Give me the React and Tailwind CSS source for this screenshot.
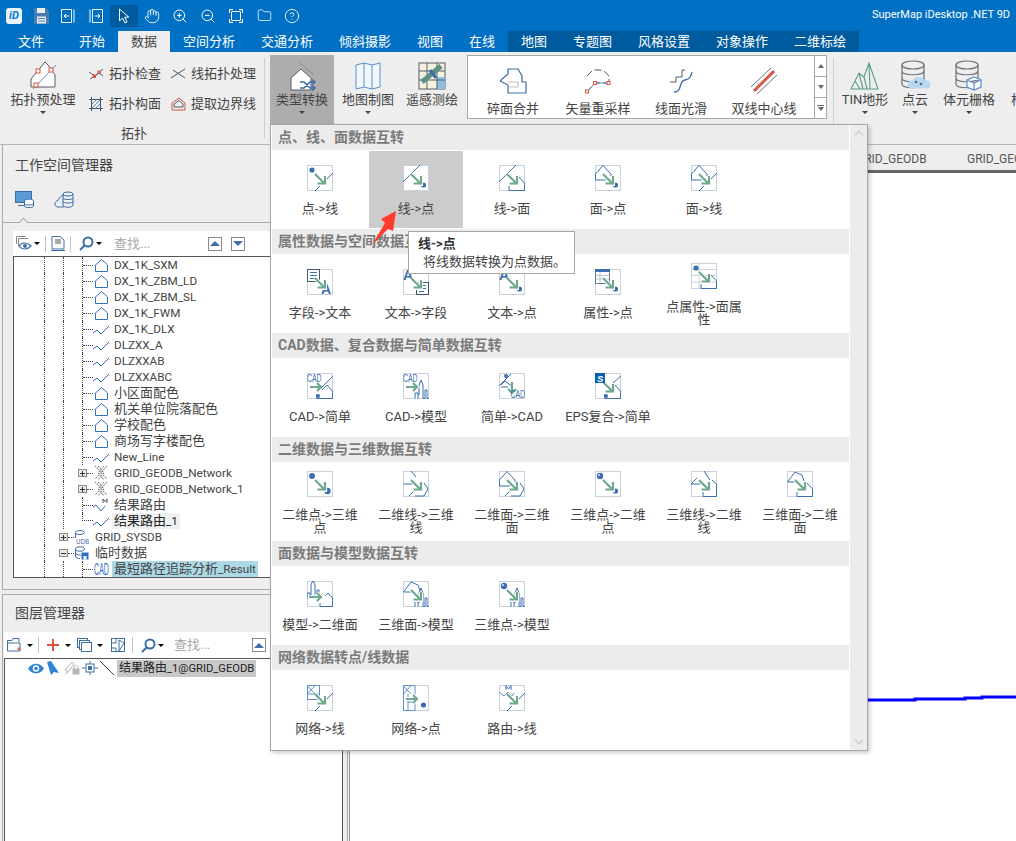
import React from "react";
import { ChevronUp, ChevronDown, Hand, ZoomIn, ZoomOut, Folder, CircleHelp } from "lucide-react";

const BLUE = "#3b6fb0";
const GREEN = "#6fa88f";

// shared pieces of the 26x26 conversion icons
const Dot = ({ x, y, r = 2.6, c = BLUE }) => <circle cx={x} cy={y} r={r} fill={c} />;
const Ball = ({ x, y, r = 3.2 }) => (
  <g>
    <circle cx={x} cy={y} r={r} fill={BLUE} />
    <circle cx={x - 1} cy={y - 1} r={1.1} fill="#cfe0f2" />
  </g>
);
const P = ({ d, c = BLUE, w = 1 }) => <path d={d} fill="none" stroke={c} strokeWidth={w} />;
const LineBR = () => <P d="M8 26 L26 8" />;
const LineTL = () => <P d="M0 17 L17 0" />;
const HouseBR = () => <P d="M10 25.5 H25.5 V18 L20 12 L15 17 M10 25.5 V21" />;
const HouseTL = () => <P d="M0.5 9 L8 0.5 L16 9 V11 M0.5 9 V15 H11" />;
const Line3dBR = () => <P d="M6 25 L11 20 M12 25 H21 L25 18 L21 12" />;
const House3dTL = () => <P d="M0.5 11 L8 1 L15 4 L17 10 M0.5 11 H12" />;
const Skyline = ({ x = 11, y = 0 }) => (
  <g transform={`translate(${x} ${y})`}>
    <P d="M0 25.5 V20 H3 V25.5 M3 22 H4 V12 L6 7 L8 12 V25.5 H10 V17 H12 V25.5 H14.5" />
  </g>
);
const Cad = ({ x = 0, y = 9 }) => (
  <text x={x} y={y} fontSize="10" fill={BLUE} textLength="14.5" lengthAdjust="spacingAndGlyphs" fontFamily="Liberation Sans">
    CAD
  </text>
);
const BigA = ({ x, y }) => (
  <text x={x} y={y} fontSize="14" fontWeight="700" fill={BLUE} fontFamily="Liberation Sans">
    A
  </text>
);
const Doc = ({ x, y }) => (
  <g transform={`translate(${x} ${y})`}>
    <rect x="0.5" y="0.5" width="12" height="12" fill="#fff" stroke="#44546a" />
    <P d="M3 3.5 H10 M3 6.5 H10 M3 9.5 H8" />
  </g>
);
const Table = () => (
  <g>
    <rect x="0.5" y="0.5" width="14" height="14" fill="#fff" stroke="#6a7a90" />
    <rect x="0" y="0" width="15" height="3" fill={BLUE} />
    <P d="M1 6.5 H14 M1 10 H14 M5 3 V14" c="#b8c4d4" />
  </g>
);
const ArrowDiag = () => (
  <g>
    <P d="M8 9 L18 19 M10 19 H18 V11" c="#fff" w={4} />
    <P d="M8 9 L18 19 M10.5 18.5 H18 V11" c={GREEN} w={2.2} />
  </g>
);
const ArrowRight = ({ y = 14 }) => (
  <g>
    <P d={`M3 ${y} H14 M10 ${y - 4} L14 ${y} L10 ${y + 4}`} c="#fff" w={4} />
    <P d={`M3 ${y} H14 M10 ${y - 4} L14 ${y} L10 ${y + 4}`} c={GREEN} w={2.2} />
  </g>
);
const ArrowDown = () => <P d="M13 9 V20 M9 16 L13 20 L17 16" c={GREEN} w={2.2} />;

function ConvIcon({ kind }) {
  const parts = {
    pl: [<Dot key="a" x={5} y={5} />, <LineBR key="b" />, <ArrowDiag key="c" />],
    lp: [<LineTL key="a" />, <Dot key="b" x={20.5} y={20} />, <ArrowDiag key="c" />],
    lf: [<LineTL key="a" />, <HouseBR key="b" />, <ArrowDiag key="c" />],
    fp: [<HouseTL key="a" />, <Dot key="b" x={20.5} y={20} />, <ArrowDiag key="c" />],
    fl: [<HouseTL key="a" />, <LineBR key="b" />, <ArrowDiag key="c" />],
    ft: [<Doc key="a" x={0} y={0} />, <BigA key="b" x={14} y={25} />, <ArrowDiag key="c" />],
    tf: [<BigA key="a" x={0} y={11} />, <Doc key="b" x={13} y={13} />, <ArrowDiag key="c" />],
    tp: [<BigA key="a" x={0} y={11} />, <Dot key="b" x={20.5} y={20} />, <ArrowDiag key="c" />],
    ap: [<Table key="a" />, <Dot key="b" x={20.5} y={20} />, <ArrowDiag key="c" />],
    aa: [
      <P key="g" d="M0.5 6.5 H25.5 M0.5 12.5 H25.5 M0.5 19 H25.5 M8 0 V26" c="#c9d1de" />,
      <Dot key="a" x={5} y={5} />,
      <HouseBR key="b" />,
      <ArrowDiag key="c" />,
    ],
    cs: [<Cad key="a" />, <ArrowRight key="b" />, <Dot key="d" x={11} y={23} r={2} />, <P key="e" d="M14 15 L26 3" />, <HouseBR key="f" />],
    cm: [<Cad key="a" />, <Skyline key="c" x={12} />, <ArrowRight key="b" />],
    sc: [<Dot key="a" x={7} y={3} r={2} />, <P key="b" d="M0 13 L12 1 M2 12 L6 8 L14 14 M2 14 H9" />, <ArrowDown key="c" />, <Cad key="d" x={11.5} y={25} />],
    es: [
      <Dot key="d" x={11} y={23} r={2} />,
      <P key="e" d="M18 10 L26 3" />,
      <HouseBR key="f" />,
      <ArrowDiag key="c" />,
      <rect key="a" x="0" y="0" width="10" height="10" fill="#0b5fb0" />,
      <text key="b" x="2" y="8.5" fontSize="9.5" fontWeight="700" fontStyle="italic" fill="#fff" fontFamily="Liberation Sans">S</text>,
    ],
    p23: [<Dot key="a" x={5} y={5} r={3} />, <Ball key="b" x={20.5} y={20} />, <ArrowDiag key="c" />],
    l23: [<P key="a" d="M8 0 L13 6 M0 13 H12" />, <Line3dBR key="b" />, <ArrowDiag key="c" />],
    f23: [<HouseTL key="a" />, <Line3dBR key="b" />, <ArrowDiag key="c" />],
    p32: [<Ball key="a" x={5} y={5} />, <Dot key="b" x={20.5} y={20} />, <ArrowDiag key="c" />],
    l32: [<P key="a" d="M0 13 L6 7 M13 0 L19 9 M0 13 H12" />, <P key="b" d="M12 25.5 H25.5 V13 L21 9 M12 25.5 V21" />, <ArrowDiag key="c" />],
    f32: [<House3dTL key="a" />, <HouseBR key="b" />, <ArrowDiag key="c" />],
    mf: [<Skyline key="a" x={0} y={-8} />, <P key="b" d="M13 25.5 H25.5 V17 L21 12 L18 15 M13 25.5 V22" />, <ArrowRight key="c" y={16} />],
    fm: [<House3dTL key="a" />, <Skyline key="b" x={12} />, <ArrowDiag key="c" />],
    pm: [<Ball key="a" x={5} y={5} />, <Skyline key="b" x={12} />, <ArrowDiag key="c" />],
    nl: [<P key="a" d="M0.5 0.5 H12.5 V14.5 H0.5 Z M0.5 9 L8 0.5 M0.5 1 L12 13 M0.5 9 H12" c="#5f8fc7" />, <LineBR key="b" />, <ArrowDiag key="c" />],
    np: [<P key="a" d="M0.5 0.5 H12 V25.5 H0.5 Z M0.5 9 L8 0.5 M0.5 1 L8 9 M5 9 V25.5 M5 17 H12" c="#5f8fc7" />, <ArrowRight key="b" />, <Dot key="c" x={20.5} y={20} />],
    rl: [
      <P key="a" d="M0 7 L5 11 L9 7 L13 11 L15 8" c="#5f8fc7" />,
      <P key="b" d="M7 5 V0.5 L9.5 4 L12 0.5 V5" />,
      <LineBR key="c" />,
      <ArrowDiag key="d" />,
    ],
  };
  return (
    <svg width="26" height="26" viewBox="0 0 26 26" className="shrink-0">
      <rect x="0.5" y="0.5" width="25" height="25" fill="#fff" stroke="#c9d1de" />
      {parts[kind]}
    </svg>
  );
}

const sections = [
  {
    title: "点、线、面数据互转",
    items: [["点->线", "pl"], ["线->点", "lp", true], ["线->面", "lf"], ["面->点", "fp"], ["面->线", "fl"]],
  },
  {
    title: "属性数据与空间数据互转",
    items: [["字段->文本", "ft"], ["文本->字段", "tf"], ["文本->点", "tp"], ["属性->点", "ap"], ["点属性->面属性", "aa"]],
  },
  {
    title: "CAD数据、复合数据与简单数据互转",
    items: [["CAD->简单", "cs"], ["CAD->模型", "cm"], ["简单->CAD", "sc"], ["EPS复合->简单", "es"]],
  },
  {
    title: "二维数据与三维数据互转",
    items: [["二维点->三维点", "p23"], ["二维线->三维线", "l23"], ["二维面->三维面", "f23"], ["三维点->二维点", "p32"], ["三维线->二维线", "l32"], ["三维面->二维面", "f32"]],
  },
  {
    title: "面数据与模型数据互转",
    items: [["模型->二维面", "mf"], ["三维面->模型", "fm"], ["三维点->模型", "pm"]],
  },
  {
    title: "网络数据转点/线数据",
    items: [["网络->线", "nl"], ["网络->点", "np"], ["路由->线", "rl"]],
  },
];

function TitleBar() {
  const Box = ({ flip }) => (
    <svg width="14" height="14" viewBox="0 0 14 14" fill="none" stroke="#fff" strokeWidth="1" className={flip ? "-scale-x-100" : ""}>
      <path d="M0.5 0.5 H10.5 V13.5 H0.5 Z M13 0.5 V13.5 M8 7 H3 M5 5 L3 7 L5 9" />
    </svg>
  );
  const cell = "flex h-[22px] w-[28px] items-center justify-center";
  return (
    <div className="flex h-[31px] items-center bg-[#0070c4] text-white">
      <div className="ml-[6px] flex h-[16px] w-[16px] items-center justify-center rounded-[3px] bg-[#e8f3fb]">
        <span className="text-[11px] font-bold italic leading-none text-[#0a78c8]">iD</span>
      </div>
      <svg width="15" height="16" viewBox="0 0 15 16" className="ml-[12px]">
        <path d="M0 0 H12 L15 3 V16 H0 Z" fill="#4b7cb4" />
        <rect x="3" y="0" width="8" height="5" fill="#e9edf2" />
        <path d="M2.5 8 H12.5 V16 H2.5 Z M4 10.5 H11 M4 13 H11" fill="#e9edf2" stroke="#4b7cb4" />
      </svg>
      <div className={`${cell} ml-[5px]`}><Box /></div>
      <div className={cell}><Box flip /></div>
      <div className={`${cell} bg-[#005a9e]`}>
        <svg width="12" height="16" viewBox="0 0 12 16" fill="none" stroke="#fff">
          <path d="M1.5 1 V13 L4.5 10 L7 15 L9 14 L6.8 9.2 H10.8 Z" />
        </svg>
      </div>
      <div className={cell}><Hand size={16} strokeWidth={1.3} /></div>
      <div className={cell}><ZoomIn size={16} strokeWidth={1.5} /></div>
      <div className={cell}><ZoomOut size={16} strokeWidth={1.5} /></div>
      <div className={cell}>
        <svg width="14" height="14" viewBox="0 0 14 14" fill="none" stroke="#fff">
          <path d="M0.5 4 V0.5 H4 M10 0.5 H13.5 V4 M13.5 10 V13.5 H10 M4 13.5 H0.5 V10 M2.5 2.5 H11.5 V11.5 H2.5 Z" />
        </svg>
      </div>
      <div className={cell}><Folder size={15} strokeWidth={1.2} /></div>
      <div className={cell}><CircleHelp size={16} strokeWidth={1.3} /></div>
      <span className="ml-auto w-[144px] shrink-0 overflow-hidden whitespace-nowrap text-[11px]">SuperMap iDesktop .NET 9D</span>
    </div>
  );
}

function TabRow() {
  const tab = "flex h-full items-center justify-center whitespace-nowrap text-[13px] text-white";
  const main = [["文件", 66], ["开始", 52], ["数据", 52], ["空间分析", 78], ["交通分析", 78], ["倾斜摄影", 78], ["视图", 52], ["在线", 52]];
  const ctx = [["地图", 52], ["专题图", 65], ["风格设置", 78], ["对象操作", 78], ["二维标绘", 78]];
  return (
    <div className="flex h-[21px] items-stretch bg-[#0070c4]">
      {main.map(([t, w]) => (
        <div
          key={t}
          style={{ width: w }}
          className={t === "数据" ? "flex h-full items-center justify-center bg-[#eeeeee] text-[13px] text-[#444]" : t === "文件" ? `${tab} pr-[4px]` : tab}
        >
          {t}
        </div>
      ))}
      {ctx.map(([t, w]) => (
        <div key={t} style={{ width: w }} className={`${tab} bg-[#005a9e]`}>
          {t}
        </div>
      ))}
    </div>
  );
}

const Caret = () => <span className="mt-[3px] h-0 w-0 border-x-[3px] border-t-[3px] border-x-transparent border-t-[#444]" />;

function BigBtn({ label, w, active, caret = true, children }) {
  return (
    <div
      style={{ width: w }}
      className={`flex shrink-0 flex-col items-center whitespace-nowrap pt-[5px] text-[13px] leading-[16px] text-[#444] ${active ? "h-[69px] bg-[#adadad]" : ""}`}
    >
      <div className="flex h-[32px] items-center justify-center">{children}</div>
      <span>{label}</span>
      {caret && <Caret />}
    </div>
  );
}

function SmallBtn({ label, children }) {
  return (
    <div className="flex h-[30px] items-center gap-[5px] whitespace-nowrap text-[13px] text-[#444]">
      <span className="flex w-[16px] justify-center">{children}</span>
      {label}
    </div>
  );
}

const DB = ({ children }) => (
  <svg width="38" height="32" viewBox="0 0 38 32" fill="none" stroke="#6a7078" strokeWidth="1.2">
    <ellipse cx="17" cy="5" rx="11" ry="4" />
    <path d="M6 5 V24 C6 29 28 29 28 24 V5 M6 11 C6 16 28 16 28 11 M6 18 C6 23 28 23 28 18" />
    {children}
  </svg>
);

function Ribbon() {
  return (
    <div className="flex h-[93px] items-start border-b border-[#b5b5b5] bg-[#eeeeee] pt-[3px]">
      <div className="relative flex h-[86px] w-[265px] shrink-0">
        <BigBtn label="拓扑预处理" w={86}>
          <svg width="26" height="28" viewBox="0 0 26 28" fill="#fff" stroke="#555c66">
            <path d="M1 17 V25 H25 V13 L18 3 L15 0 L1 17" />
            <path d="M3 27 L26 3" fill="none" stroke="#5b8ec9" />
            <rect x="4" y="21" width="4" height="4" fill="#fff" stroke="#d9553f" />
            <rect x="19" y="6" width="4" height="4" fill="#fff" stroke="#d9553f" />
            <rect x="6" y="7" width="4" height="4" fill="#fff" stroke="#d9553f" />
          </svg>
        </BigBtn>
        <div className="ml-[2px] flex flex-col pt-[4px]">
          <SmallBtn label="拓扑检查">
            <svg width="15" height="12" viewBox="0 0 15 12" fill="none" stroke="#555c66">
              <path d="M0 4 L6 8 L14 1 M1 11 L6 8 L10 5 L14 8" />
              <rect x="4" y="7" width="2.5" height="2.5" stroke="#d9553f" />
              <rect x="9" y="3" width="2.5" height="2.5" stroke="#d9553f" />
            </svg>
          </SmallBtn>
          <SmallBtn label="拓扑构面">
            <svg width="14" height="14" viewBox="0 0 14 14" fill="none" stroke="#44546a">
              <path d="M2.5 0 V14 M11.5 0 V14 M0 2.5 H14 M0 11.5 H14" />
              <path d="M3 7 L7 3 M3 11 L11 3 M7 11 L11 7" stroke="#5b8ec9" />
            </svg>
          </SmallBtn>
        </div>
        <div className="ml-[9px] flex flex-col pt-[4px]">
          <SmallBtn label="线拓扑处理">
            <svg width="15" height="12" viewBox="0 0 15 12" fill="none" stroke="#44546a">
              <path d="M0 10 L14 1 M2 2 L14 10" />
            </svg>
          </SmallBtn>
          <SmallBtn label="提取边界线">
            <svg width="15" height="14" viewBox="0 0 15 14" fill="none" stroke="#555c66">
              <path d="M1 13 V6 L8 1 L14 6 V13 Z" stroke="#d9553f" />
              <path d="M3 10 V7 L8 3.5 L12 7 V10 H3" />
            </svg>
          </SmallBtn>
        </div>
        <span className="absolute right-0 top-[3px] h-[80px] w-[1px] bg-[#d0d0d0]" />
        <span className="absolute bottom-[-1px] left-[121px] text-[13px] leading-[16px] text-[#444]">拓扑</span>
      </div>

      <div className="ml-[5px]">
        <BigBtn label="类型转换" w={64} active>
          <svg width="28" height="30" viewBox="0 0 28 30" fill="none">
            <path d="M12 2 L26 14" stroke="#8b8b8b" />
            <path d="M3 29 V17 L13 8 L23 17 V29 Z" fill="#fff" stroke="#555c66" />
            <path d="M12 21 H16 L22 27 H26 M12 27 H16 L22 21 H26 M24 18.5 L27 21 L24 23.5 M24 24.5 L27 27 L24 29.5" stroke="#3d6ea8" strokeWidth="1.6" />
          </svg>
        </BigBtn>
      </div>
      <BigBtn label="地图制图" w={68}>
        <svg width="26" height="28" viewBox="0 0 26 28" fill="#f2f7fc" stroke="#5b8ec9">
          <path d="M1 3 L9 1 L17 3 L25 1 V25 L17 27 L9 25 L1 27 Z M9 1 V25 M17 3 V27" />
        </svg>
      </BigBtn>
      <BigBtn label="遥感测绘" w={60} caret={false}>
        <svg width="28" height="28" viewBox="0 0 28 28" fill="none">
          <rect x="1" y="1" width="26" height="26" fill="#f6f2dd" stroke="#555c66" />
          <rect x="19" y="15" width="8" height="12" fill="#8fbfe0" />
          <path d="M1 9 H27 M1 18 H27 M9 1 V27 M19 1 V27" stroke="#555c66" />
          <path d="M4 20 L23 4" stroke="#5d8f86" strokeWidth="5" />
          <path d="M12 8 L18 16" stroke="#3d6ea8" strokeWidth="3" />
        </svg>
      </BigBtn>

      <div className="ml-[5px] flex h-[64px] w-[360px] shrink-0 border border-[#a8a8a8] bg-white">
        <div className="flex flex-1 pt-[2px]">
          <GalleryItem label="碎面合并" w={90}>
            <svg width="28" height="26" viewBox="0 0 28 26" fill="none" stroke="#3d6ea8" strokeWidth="1.2">
              <path d="M1 13 L9 6 V1 H19 L23 8 V14 H27 V25 H9 V17 L1 13" />
              <path d="M9 14 H19 V19 H9" stroke="#c0c0c0" />
            </svg>
          </GalleryItem>
          <GalleryItem label="矢量重采样" w={80}>
            <svg width="26" height="26" viewBox="0 0 26 26" fill="none">
              <path d="M2 24 L10 15 H24 M2 8 L8 2 H18 L24 8 V15" stroke="#555c66" strokeDasharray="7 3" />
              <path d="M2 24 L10 15 H24" stroke="#5b8ec9" />
              <rect x="0.5" y="22" width="3" height="3" fill="#fff" stroke="#d9553f" />
              <rect x="8.5" y="13.5" width="3" height="3" fill="#fff" stroke="#d9553f" />
              <rect x="22" y="13.5" width="3" height="3" fill="#fff" stroke="#d9553f" />
            </svg>
          </GalleryItem>
          <GalleryItem label="线面光滑" w={86}>
            <svg width="24" height="26" viewBox="0 0 24 26">
              <path d="M1 14 H7 V9 H13 V2 H16" fill="none" stroke="#555c66" />
              <path d="M5 24 C14 24 9 13 16 12 C21 11 22 8 23 4" fill="none" stroke="#3d6ea8" strokeWidth="1.3" />
            </svg>
          </GalleryItem>
          <GalleryItem label="双线中心线" w={80}>
            <svg width="26" height="26" viewBox="0 0 26 26" fill="none">
              <path d="M0 19 L20 0 M6 26 L26 7" stroke="#6a7078" />
              <path d="M3 23 L23 3" stroke="#d9553f" strokeWidth="3" />
            </svg>
          </GalleryItem>
        </div>
        <div className="flex w-[12px] flex-col border-l border-[#a8a8a8] text-[#666]">
          <div className="flex h-[21px] items-center justify-center border-b border-[#a8a8a8]">
            <span className="h-0 w-0 border-x-[3.5px] border-b-[4px] border-x-transparent border-b-[#666]" />
          </div>
          <div className="flex h-[21px] items-center justify-center border-b border-[#a8a8a8]">
            <span className="h-0 w-0 border-x-[3.5px] border-t-[4px] border-x-transparent border-t-[#666]" />
          </div>
          <div className="flex flex-1 flex-col items-center justify-center gap-[1px]">
            <span className="h-[1px] w-[7px] bg-[#666]" />
            <span className="h-0 w-0 border-x-[3.5px] border-t-[4px] border-x-transparent border-t-[#666]" />
          </div>
        </div>
      </div>

      <div className="ml-[6px] mt-[3px] h-[80px] border-l border-[#d0d0d0]" />
      <div className="flex">
        <BigBtn label="TIN地形" w={62}>
          <svg width="30" height="28" viewBox="0 0 30 28" fill="none" stroke="#5d9a8c" strokeWidth="1.1">
            <path d="M1 27 L9 11 L14 15 L19 1 L28 27 Z M9 11 L13 27 M14 15 L17 27 M19 1 L20 27 M5 19 L10 27" />
          </svg>
        </BigBtn>
        <BigBtn label="点云" w={38}>
          <DB>
            <path d="M16 28 C11 28 11 21 17 21 C18 16 27 16 28 21 C35 20 36 28 30 28 Z" fill="#bdd7ee" stroke="#bdd7ee" />
            <circle cx="20" cy="22" r="1.3" fill="#3d6ea8" stroke="none" />
            <circle cx="25" cy="24" r="1.3" fill="#3d6ea8" stroke="none" />
          </DB>
        </BigBtn>
        <BigBtn label="体元栅格" w={70}>
          <DB>
            <path d="M24 17 L31 20 V27 L24 30 L17 27 V20 Z M17 20 L24 23 L31 20 M24 23 V30" fill="#fff" stroke="#5b8ec9" />
          </DB>
        </BigBtn>
        <BigBtn label="构建" w={40} caret={false}>
          <span />
        </BigBtn>
      </div>
    </div>
  );
}

function GalleryItem({ label, w, children }) {
  return (
    <div style={{ width: w }} className="flex shrink-0 flex-col items-center whitespace-nowrap pt-[10px] text-[13px] leading-[16px] text-[#444]">
      <div className="flex h-[26px] items-center justify-center">{children}</div>
      <span className="mt-[7px]">{label}</span>
    </div>
  );
}

const HouseIcon = () => (
  <svg width="13" height="13" viewBox="0 0 13 13" fill="none" stroke="#2f6fc4"><path d="M0.5 12.5 V6 L6.5 0.5 L12.5 6 V12.5 Z" /></svg>
);
const LineIcon = () => (
  <svg width="16" height="8" viewBox="0 0 16 8" fill="none" stroke="#2f6fc4" className="mt-[2px]"><path d="M0 7 L4 4 L8 8 L16 0" /></svg>
);
const NetIcon = () => (
  <svg width="14" height="14" viewBox="0 0 14 14" fill="none" stroke="#666c74"><path d="M1 0 L13 13 M13 0 L1 13 M4 0 L10 7 L4 14 M10 0 L4 7 L10 14" strokeDasharray="2 1" /></svg>
);
const RouteIcon = () => (
  <svg width="16" height="14" viewBox="0 0 16 14" fill="none" stroke="#2f6fc4">
    <path d="M0 9 L3 7 L8 13 L12 8" />
    <path d="M10 5 V1 L12 3.5 L14 1 V5" stroke="#44546a" />
  </svg>
);
const UdbIcon = () => (
  <svg width="14" height="14" viewBox="0 0 14 14" fill="none" stroke="#3d6ea8">
    <ellipse cx="5" cy="2.5" rx="4.5" ry="2" />
    <path d="M0.5 3 V8" />
    <text x="1" y="13.5" fontSize="7" fill="#3d6ea8" stroke="none" textLength="13" lengthAdjust="spacingAndGlyphs" fontFamily="Liberation Sans">UDB</text>
  </svg>
);
const TempIcon = () => (
  <svg width="14" height="14" viewBox="0 0 14 14" fill="none" stroke="#3d6ea8">
    <ellipse cx="5" cy="3" rx="4.5" ry="2.2" />
    <path d="M0.5 3 V10 C0.5 12 3 12.5 5 12.5 M0.5 7 C1 9 4 9 6 9" />
    <rect x="6.5" y="6.5" width="7" height="7" fill="#2f6fc4" stroke="none" />
    <rect x="8.5" y="10" width="3" height="3.5" fill="#fff" stroke="none" />
  </svg>
);
const CadIcon = () => (
  <svg width="15" height="14" viewBox="0 0 15 14">
    <text x="0" y="13" fontSize="16" fill="#2f6fc4" textLength="15" lengthAdjust="spacingAndGlyphs" fontFamily="Liberation Sans">CAD</text>
  </svg>
);

const treeRows = [
  ["DX_1K_SXM", HouseIcon],
  ["DX_1K_ZBM_LD", HouseIcon],
  ["DX_1K_ZBM_SL", HouseIcon],
  ["DX_1K_FWM", HouseIcon],
  ["DX_1K_DLX", LineIcon],
  ["DLZXX_A", LineIcon],
  ["DLZXXAB", LineIcon],
  ["DLZXXABC", LineIcon],
  ["小区面配色", HouseIcon],
  ["机关单位院落配色", HouseIcon],
  ["学校配色", HouseIcon],
  ["商场写字楼配色", HouseIcon],
  ["New_Line", LineIcon],
  ["GRID_GEODB_Network", NetIcon, { exp: "+" }],
  ["GRID_GEODB_Network_1", NetIcon, { exp: "+" }],
  ["结果路由", RouteIcon],
  ["结果路由_1", LineIcon, { last: true, cls: "bg-[#f0f0f0] text-[#222]" }],
  ["GRID_SYSDB", UdbIcon, { depth: 2, exp: "+" }],
  ["临时数据", TempIcon, { depth: 2, exp: "-" }],
  ["最短路径追踪分析_Result", CadIcon, { cls: "bg-[#add8e6]" }],
];

// latin runs sit a size below the CJK runs, as in the tree labels of the app
const Mixed = ({ text }) =>
  text.split(/([\x00-\x7f]+)/).map((part, i) =>
    /[\x00-\x7f]/.test(part) ? (
      <span key={i} className="text-[11.7px]">{part}</span>
    ) : (
      part
    )
  );

const Expander = ({ sign }) => (
  <span className="relative z-10 flex h-[8px] w-[9px] shrink-0 items-center justify-center border border-[#8a8a8a] bg-[#e8e8e8]">
    <span className="absolute h-[1px] w-[5px] bg-[#333]" />
    {sign === "+" && <span className="absolute h-[5px] w-[1px] bg-[#333]" />}
  </span>
);

function TreeRow({ label, Icon, depth = 3, exp, last, cls = "" }) {
  const guide = "h-full w-[19px] shrink-0 border-l border-dotted border-[#444]";
  const dots = "h-0 shrink-0 border-t border-dotted border-[#444]";
  return (
    <div className="flex h-[16px] items-center whitespace-nowrap pl-[30px] text-[13px] leading-[16px] text-[#444]">
      <span className={guide} />
      {depth === 3 ? (
        <>
          <span className={guide} />
          {exp ? (
            <>
              <span className="-ml-[4px] flex"><Expander sign={exp} /></span>
              <span className={`${dots} w-[6px]`} />
            </>
          ) : last ? (
            <span className="flex h-full w-[11px] shrink-0 flex-col">
              <span className="h-[8px] border-b border-l border-dotted border-[#444]" />
            </span>
          ) : (
            <span className="flex h-full w-[11px] shrink-0 items-center border-l border-dotted border-[#444]">
              <span className={`${dots} w-full`} />
            </span>
          )}
        </>
      ) : (
        <>
          <span className="-ml-[4px] flex w-[15px] shrink-0"><Expander sign={exp} /></span>
          <span className={`${dots} -ml-[6px] w-[6px]`} />
        </>
      )}
      <span className="flex w-[16px] shrink-0 justify-center"><Icon /></span>
      <span className={`ml-[3px] px-[2px] ${cls}`}><Mixed text={label} /></span>
    </div>
  );
}

const ToolCaret = () => <span className="ml-[2px] block h-0 w-0 border-x-[3px] border-t-[3px] border-x-transparent border-t-black" />;
const ToolSep = () => <span className="mx-[5px] h-[16px] w-[1px] bg-[#c4c4c4]" />;
const Magnifier = () => (
  <svg width="15" height="15" viewBox="0 0 15 15" fill="none" stroke="#3d6ea8" strokeWidth="2"><circle cx="9" cy="6" r="4.5" /><path d="M5.5 9.5 L1 14" /></svg>
);
const ScrollBtn = ({ up }) => (
  <span className="flex h-[14px] w-[14px] shrink-0 items-center justify-center border border-[#8a8a8a] bg-white">
    <span className={`h-0 w-0 border-x-[5px] border-x-transparent ${up ? "border-b-[5px] border-b-[#3d6ea8]" : "border-t-[5px] border-t-[#3d6ea8]"}`} />
  </span>
);

function WorkspacePanel() {
  return (
    <div className="ml-[2px] h-[445px] w-[346px] border-x border-b border-[#aaaaaa]">
      <div className="flex h-[41px] items-center pl-[12px] text-[14px] text-[#444]">工作空间管理器</div>
      <div className="relative flex h-[37px] items-start gap-[20px] border-b border-[#aaaaaa] pl-[12px] pt-[5px]">
        <svg width="19" height="17" viewBox="0 0 19 17" fill="none">
          <rect x="0.5" y="0.5" width="16" height="11" fill="#5b9bd5" stroke="#3d6ea8" />
          <path d="M3 14.5 H12" stroke="#3d6ea8" />
          <ellipse cx="14" cy="10" rx="4.5" ry="2" fill="#fff" stroke="#3d6ea8" />
          <path d="M9.5 10 V15 C9.5 17 18.5 17 18.5 15 V10 M9.5 12.5 C9.5 14.5 18.5 14.5 18.5 12.5" fill="#fff" stroke="#3d6ea8" />
        </svg>
        <svg width="20" height="17" viewBox="0 0 20 17" fill="none" stroke="#3d6ea8">
          <path d="M10 16 H4 C0 16 0 10 4 9.5 C5 6 8 4 10 5" />
          <ellipse cx="14" cy="3" rx="5" ry="2" />
          <path d="M9 3 V14 C9 17 19 17 19 14 V3 M9 7 C9 9 19 9 19 7 M9 10.5 C9 12.5 19 12.5 19 10.5" />
        </svg>
        <span className="absolute bottom-[-4px] left-[17px] h-[7px] w-[7px] rotate-45 border-l border-t border-[#aaaaaa] bg-[#eeeeee]" />
      </div>
      <div className="ml-[10px] mr-[4px] mt-[8px] flex h-[25px] items-center bg-white pl-[3px]">
        <svg width="16" height="15" viewBox="0 0 16 15" fill="none" stroke="#8a8a8a">
          <path d="M0.5 8 V0.5 H10 M2.5 10 V2.5 H12" />
          <path d="M3 10 C6 6 11 6 15 10 C11 14 6 14 3 10 Z" fill="#fff" stroke="#3d6ea8" strokeWidth="1.2" />
          <circle cx="9" cy="10" r="2" fill="#3d6ea8" stroke="none" />
        </svg>
        <ToolCaret />
        <ToolSep />
        <svg width="14" height="15" viewBox="0 0 14 15" fill="none">
          <path d="M1 0.5 H9 L13 4 V13 H1 Z" fill="#fff" stroke="#3d6ea8" />
          <rect x="4" y="3" width="6" height="5" fill="#aaa" />
          <path d="M0 14.5 H14" stroke="#3d6ea8" />
        </svg>
        <ToolSep />
        <span className="ml-[3px] flex"><Magnifier /></span>
        <ToolCaret />
        <span className="ml-[12px] w-[94px] shrink-0 text-[13px] text-[#a8a8a8]">查找...</span>
        <ScrollBtn up />
        <span className="ml-[9px] flex"><ScrollBtn /></span>
      </div>
      <div className="ml-[10px] mr-[4px] h-[322px] overflow-hidden border border-[#555] bg-white">
        {treeRows.map(([label, Icon, opts]) => (
          <TreeRow key={label} label={label} Icon={Icon} {...opts} />
        ))}
      </div>
    </div>
  );
}

function LayerPanel() {
  return (
    <div className="ml-[2px] mt-[4px] flex h-[247px] w-[346px] flex-col border-x border-t border-[#aaaaaa]">
      <div className="flex h-[37px] shrink-0 items-center pl-[12px] text-[14px] text-[#444]">图层管理器</div>
      <div className="ml-[1px] mr-[4px] flex h-[26px] shrink-0 items-center bg-white pl-[3px]">
        <svg width="15" height="14" viewBox="0 0 15 14" fill="none" stroke="#3d6ea8">
          <path d="M0.5 13 V2.5 H5 L6 0.5 H12 V4 M0.5 5 H13 V13 H0.5" />
          <path d="M10 11 H14 M12 9 V13" stroke="#d9553f" />
        </svg>
        <span className="ml-[3px] flex"><ToolCaret /></span>
        <ToolSep />
        <svg width="14" height="14" viewBox="0 0 14 14" stroke="#d9553f" strokeWidth="2" className="ml-[2px]"><path d="M7 1 V13 M1 7 H13" /></svg>
        <span className="ml-[3px] flex"><ToolCaret /></span>
        <svg width="15" height="14" viewBox="0 0 15 14" fill="#fff" stroke="#3d6ea8" className="ml-[6px]">
          <rect x="0.5" y="0.5" width="10" height="9" />
          <rect x="2.5" y="2.5" width="10" height="9" />
          <rect x="4.5" y="4.5" width="10" height="9" />
        </svg>
        <span className="ml-[3px] flex"><ToolCaret /></span>
        <svg width="14" height="14" viewBox="0 0 14 14" fill="none" stroke="#3d6ea8" className="ml-[8px]">
          <rect x="0.5" y="0.5" width="13" height="13" />
          <path d="M0 5 H5 V0 M0 10 H5 V14 M8 13 L13 5 L8 2 Z" />
        </svg>
        <span className="ml-[2px] flex"><ToolSep /></span>
        <span className="ml-[3px] flex"><Magnifier /></span>
        <ToolCaret />
        <span className="ml-[10px] w-[78px] shrink-0 text-[13px] text-[#a8a8a8]">查找...</span>
        <ScrollBtn up />
      </div>
      <div className="ml-[1px] mr-[4px] flex-1 border-x border-t border-[#555] bg-white">
        <div className="flex h-[17px] items-center pl-[23px] pt-[1px]">
          <svg width="16" height="11" viewBox="0 0 16 11" className="shrink-0">
            <path d="M0 5.5 C4 -1 12 -1 16 5.5 C12 12 4 12 0 5.5 Z" fill="#2f84d4" />
            <circle cx="8" cy="5.5" r="3.2" fill="#fff" />
            <circle cx="8" cy="5.5" r="1.8" fill="#2f84d4" />
          </svg>
          <svg width="14" height="14" viewBox="0 0 14 14" className="ml-[2px] shrink-0">
            <path d="M1 1 L5 0 L13 12 L8 11 L5 14 Z" fill="#2f84d4" />
          </svg>
          <svg width="16" height="14" viewBox="0 0 16 14" fill="none" stroke="#b5b5b5" className="ml-[4px] shrink-0">
            <path d="M1 9 L8 1 L10 3 L4 11 Z M4 11 L1 13" />
            <rect x="9" y="8" width="6" height="5" fill="#b5b5b5" />
            <path d="M10 8 V6 C10 4 14 4 14 6 V8" />
          </svg>
          <svg width="16" height="14" viewBox="0 0 16 14" fill="none" stroke="#3d6ea8" className="ml-[2px] shrink-0">
            <path d="M8 0 V14 M0 7 H16" />
            <rect x="4" y="3" width="8" height="8" fill="#fff" />
            <rect x="6.5" y="5.5" width="3" height="3" fill="#3d6ea8" />
          </svg>
          <svg width="16" height="16" viewBox="0 0 16 16" fill="none" stroke="#444" className="ml-[1px] shrink-0">
            <path d="M1 1 L15 15" />
          </svg>
          <span className="ml-[2px] whitespace-nowrap bg-[#c8c8c8] px-[2px] text-[12px] leading-[16px] text-[#222]">
            结果路由<span className="text-[11.2px]">_1@GRID_GEODB</span>
          </span>
        </div>
      </div>
    </div>
  );
}

function MapArea() {
  const tabs = Array.from({ length: 7 });
  return (
    <div className="relative flex min-w-0 flex-1 flex-col border-l border-[#999]">
      <div className="flex h-[25px] shrink-0 items-center overflow-hidden bg-[#eeeeee] pl-[62px] pt-[3px] text-[12px] text-[#555]">
        {tabs.map((_, i) => (
          <span key={i} className="w-[111px] shrink-0">GRID_GEODB</span>
        ))}
      </div>
      <div className="h-[3px] shrink-0 bg-[#666]" />
      <div className="relative flex-1 bg-white">
        {/* route result drawn on the map canvas */}
        <svg className="absolute left-0 top-0" width="666" height="668">
          <path d="M518 527 H565 V526 H615 V525 H632 V524 H666" fill="none" stroke="#0000ff" strokeWidth="3" />
        </svg>
      </div>
    </div>
  );
}

function ConvertMenu() {
  return (
    <div className="absolute left-[270px] top-[124px] flex h-[627px] w-[598px] border border-[#a6a6a6] bg-white shadow-[2px_2px_4px_rgba(0,0,0,0.2)]">
      <div className="w-[578px] overflow-hidden pl-[1px]">
        {sections.map((s) => (
          <div key={s.title}>
            <div className="flex h-[25px] items-center bg-[#ececec] pb-[1px] pl-[6px] text-[14px] font-bold text-[#7a7a7a]">{s.title}</div>
            <div className="flex">
              {s.items.map(([label, kind, selected]) => (
                <div
                  key={label}
                  className={`flex h-[79px] w-[96px] flex-col items-center justify-center border border-transparent bg-clip-padding pt-[1px] ${selected ? "bg-[#cccccc]" : ""}`}
                >
                  <ConvIcon kind={kind} />
                  <span className="mt-[11px] w-[86px] text-center text-[13px] leading-[13px] text-[#444]">{label}</span>
                </div>
              ))}
            </div>
          </div>
        ))}
      </div>
      <div className="flex w-[18px] flex-col items-center justify-between border-l border-white bg-[#ececec] py-[1px] text-[#cfcfcf]">
        <ChevronUp size={14} strokeWidth={3} />
        <ChevronDown size={14} strokeWidth={3} />
      </div>
    </div>
  );
}

export default function App() {
  return (
    <div className="relative flex h-[841px] w-[1016px] flex-col overflow-hidden bg-[#eeeeee] [font-family:'Roboto','Noto_Sans_CJK_SC',sans-serif]">
      <TitleBar />
      <TabRow />
      <Ribbon />
      <div className="flex min-h-0 flex-1">
        <div className="w-[349px] shrink-0">
          <WorkspacePanel />
          <LayerPanel />
        </div>
        <MapArea />
      </div>

      <ConvertMenu />

      <div className="absolute left-[408px] top-[231px] h-[43px] w-[167px] border border-[#a6a6a6] bg-white pl-[9px] pt-[3px] text-[13px] leading-[18px] text-[#444]">
        <div className="font-bold text-[#333]">线-&gt;点</div>
        <div className="pl-[5px]">将线数据转换为点数据。</div>
      </div>

      <svg className="absolute left-[370px] top-[209px]" width="30" height="38" viewBox="0 0 30 38">
        <path d="M26 2 L11 10 L15 14 L2 36 L18 20 L23 22 Z" fill="#ff3b30" />
      </svg>
    </div>
  );
}
